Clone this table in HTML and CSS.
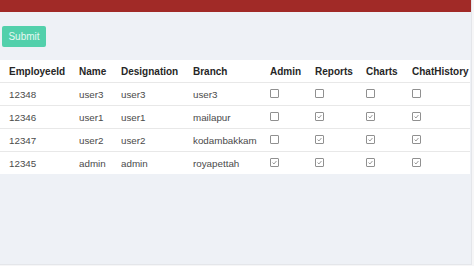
FILE: index.html
```html
<!DOCTYPE html>
<html>
<head>
<meta charset="utf-8">
<link rel="stylesheet" href="styles.css">
</head>
<body>
<div class="page">
  <div class="topbar"></div>
  <div class="main">
    <div class="actions"><button class="submit">Submit</button></div>
    <table class="grid">
      <colgroup>
        <col style="width:70px"><col style="width:42px"><col style="width:72px"><col style="width:77px">
        <col style="width:45px"><col style="width:51px"><col style="width:46px"><col style="width:67px">
      </colgroup>
      <thead>
        <tr><th>EmployeeId</th><th>Name</th><th>Designation</th><th>Branch</th><th>Admin</th><th>Reports</th><th>Charts</th><th>ChatHistory</th></tr>
      </thead>
      <tbody>
        <tr><td>12348</td><td>user3</td><td>user3</td><td>user3</td>
          <td><span class="cb"></span></td><td><span class="cb"></span></td><td><span class="cb"></span></td><td><span class="cb"></span></td></tr>
        <tr><td>12346</td><td>user1</td><td>user1</td><td>mailapur</td>
          <td><span class="cb"></span></td>
          <td><span class="cb on"><svg viewBox="0 0 9 9"><path d="M2 4.6 L3.8 6.4 L7 2.6"/></svg></span></td>
          <td><span class="cb on"><svg viewBox="0 0 9 9"><path d="M2 4.6 L3.8 6.4 L7 2.6"/></svg></span></td>
          <td><span class="cb on"><svg viewBox="0 0 9 9"><path d="M2 4.6 L3.8 6.4 L7 2.6"/></svg></span></td></tr>
        <tr><td>12347</td><td>user2</td><td>user2</td><td>kodambakkam</td>
          <td><span class="cb"></span></td>
          <td><span class="cb on"><svg viewBox="0 0 9 9"><path d="M2 4.6 L3.8 6.4 L7 2.6"/></svg></span></td>
          <td><span class="cb on"><svg viewBox="0 0 9 9"><path d="M2 4.6 L3.8 6.4 L7 2.6"/></svg></span></td>
          <td><span class="cb on"><svg viewBox="0 0 9 9"><path d="M2 4.6 L3.8 6.4 L7 2.6"/></svg></span></td></tr>
        <tr><td>12345</td><td>admin</td><td>admin</td><td>royapettah</td>
          <td><span class="cb on"><svg viewBox="0 0 9 9"><path d="M2 4.6 L3.8 6.4 L7 2.6"/></svg></span></td>
          <td><span class="cb on"><svg viewBox="0 0 9 9"><path d="M2 4.6 L3.8 6.4 L7 2.6"/></svg></span></td>
          <td><span class="cb on"><svg viewBox="0 0 9 9"><path d="M2 4.6 L3.8 6.4 L7 2.6"/></svg></span></td>
          <td><span class="cb on"><svg viewBox="0 0 9 9"><path d="M2 4.6 L3.8 6.4 L7 2.6"/></svg></span></td></tr>
      </tbody>
    </table>
  </div>
</div>
</body>
</html>
```
FILE: styles.css
```css
html, body {
  margin: 0;
  padding: 0;
  background: #f6f6f7;
}
body {
  font-family: "Liberation Sans", Arial, sans-serif;
  font-size: 10px;
  color: #333;
}
.page {
  width: 471px;
  height: 264px;
  background: #eef1f6;
  border-right: 1px solid #e4e6ea;
  border-bottom: 1px solid #e4e6ea;
  display: flex;
  flex-direction: column;
}
.topbar {
  height: 12px;
  background: #a12a27;
  flex: none;
}
.main {
  display: flex;
  flex-direction: column;
}
.actions {
  padding: 14px 0 13px 2px;
}
.submit {
  display: block;
  width: 44px;
  height: 21px;
  border: none;
  border-radius: 2px;
  background: #52d0ab;
  color: #e6f8f2;
  font-family: "Liberation Sans", Arial, sans-serif;
  font-size: 10px;
  padding: 0;
}
.grid {
  width: 470px;
  background: #fff;
  border-collapse: collapse;
  table-layout: fixed;
}
.grid th, .grid td {
  text-align: left;
  padding: 0 0 0 9px;
  white-space: nowrap;
  overflow: visible;
}
.grid th {
  height: 22px;
  font-weight: bold;
  color: #262626;
  font-size: 10px;
}
.grid td {
  height: 22px;
  border-top: 1px solid #e8e8e8;
  color: #4a4a4a;
  font-size: 9.8px;
}
.cb {
  display: inline-block;
  width: 7px;
  height: 7px;
  border: 1px solid #909090;
  border-radius: 1px;
  vertical-align: middle;
  position: relative;
  top: -1px;
}
.cb svg {
  display: block;
  width: 7px;
  height: 7px;
}
.cb path {
  fill: none;
  stroke: #7a7a7a;
  stroke-width: 1;
}
```
